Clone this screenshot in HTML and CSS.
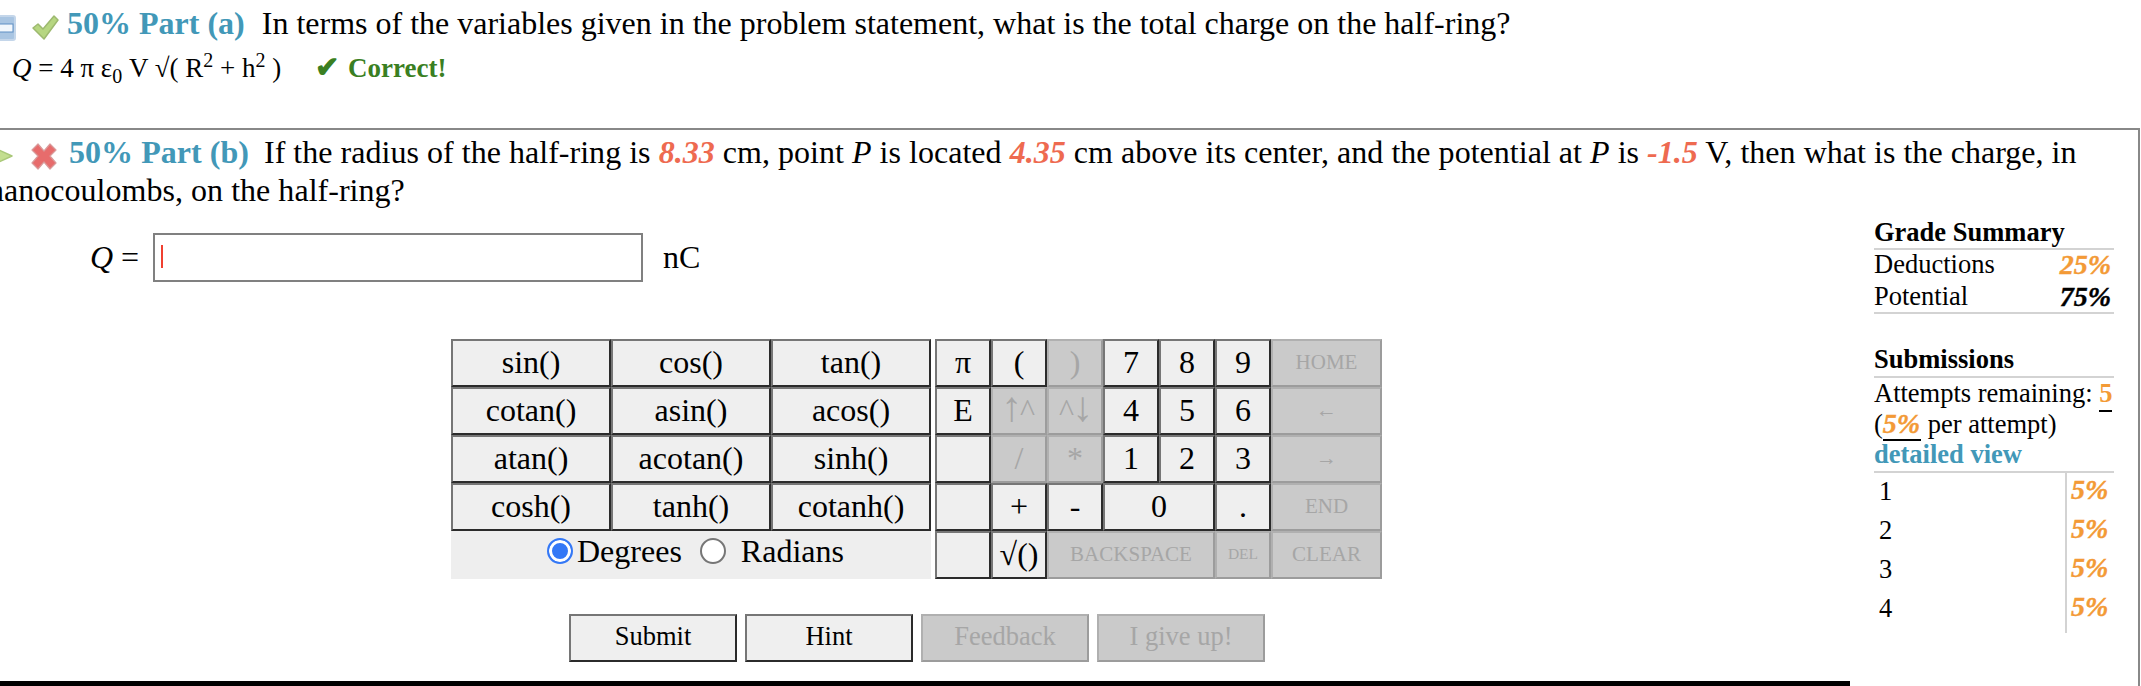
FILE: index.html
```html
<!DOCTYPE html>
<html lang="en">
<head>
<meta charset="utf-8">
<title>Part (b)</title>
<link rel="stylesheet" href="styles.css">
</head>
<body>
<section class="part-a">
  <h2 class="question">
    <svg class="icon icon-minus" viewBox="0 0 26 26"><rect x="1" y="1" width="24" height="24" rx="2" fill="#a9c5e2" stroke="#c4d6ea" stroke-width="2"/><rect x="3" y="9" width="20" height="8" fill="#f2f7fc" stroke="#5f8fc4" stroke-width="1"/></svg>
    <svg class="icon icon-check" viewBox="0 0 28 28"><path d="M2 15l5-4 5 5L23 3l4 4-14 19z" fill="#b6d681" stroke="#9db96f" stroke-width="1.5" stroke-linejoin="round"/></svg>
    <span class="part-label part-label-a">50% Part (a)</span><span class="question-text">In terms of the variables given in the problem statement, what is the total charge on the half-ring?</span>
  </h2>
  <p class="answer"><i>Q</i> = 4 π ε<sub>0</sub> V √( R<sup>2</sup> + h<sup>2</sup> )<span class="correct"><span class="tick">✔</span> Correct!</span></p>
</section>
<section class="part-b">
  <h2 class="question question-b">
    <svg class="icon icon-arrow" viewBox="0 0 28 28"><path d="M2 3l24 11L2 25z" fill="#c3de8f" stroke="#a9c878" stroke-width="1.5" stroke-linejoin="round"/></svg>
    <svg class="icon icon-cross" viewBox="0 0 26 28"><path d="M7 2l6 7 6-7 6 6-6 6 6 7-6 6-6-7-6 7-6-6 6-7-6-6z" fill="#e76c6c" stroke="#d99a9a" stroke-width="1.2" stroke-linejoin="round"/></svg>
    <span class="part-label part-label-b">50% Part (b)</span><span class="question-text">If the radius of the half-ring is <b class="var">8.33</b> cm, point <i>P</i> is located <b class="var">4.35</b> cm above its center, and the potential at <i>P</i> is <b class="var">-1.5</b> V, then what is the charge, in nanocoulombs, on the half-ring?</span>
  </h2>
  <div class="body-row">
    <div class="main">
      <div class="entry">
        <label class="entry-label"><i>Q</i> =</label>
        <div class="entry-box"><span class="caret"></span></div>
        <span class="entry-unit">nC</span>
      </div>
      <div class="calc">
        <div class="funcs">
          <button class="key">sin()</button><button class="key">cos()</button><button class="key">tan()</button>
          <button class="key">cotan()</button><button class="key">asin()</button><button class="key">acos()</button>
          <button class="key">atan()</button><button class="key">acotan()</button><button class="key">sinh()</button>
          <button class="key">cosh()</button><button class="key">tanh()</button><button class="key">cotanh()</button>
          <div class="angle">
            <input class="radio" type="radio" name="angle" checked><span class="angle-deg">Degrees</span>
            <input class="radio radio-rad" type="radio" name="angle"><span class="angle-rad">Radians</span>
          </div>
        </div>
        <div class="pad">
          <button class="key">π</button><button class="key">(</button><button class="key off">)</button><button class="key">7</button><button class="key">8</button><button class="key">9</button><button class="key off small">HOME</button>
          <button class="key">E</button><button class="key off"><span class="big-arrow">↑</span>^</button><button class="key off">^<span class="big-arrow">↓</span></button><button class="key">4</button><button class="key">5</button><button class="key">6</button><button class="key off small">←</button>
          <button class="key"></button><button class="key off">/</button><button class="key off">*</button><button class="key">1</button><button class="key">2</button><button class="key">3</button><button class="key off small">→</button>
          <button class="key"></button><button class="key">+</button><button class="key">-</button><button class="key span2">0</button><button class="key">.</button><button class="key off small">END</button>
          <button class="key"></button><button class="key">√()</button><button class="key off small span3">BACKSPACE</button><button class="key off tiny">DEL</button><button class="key off small">CLEAR</button>
        </div>
      </div>
      <div class="actions">
        <button class="key action">Submit</button>
        <button class="key action">Hint</button>
        <button class="key action off">Feedback</button>
        <button class="key action off">I give up!</button>
      </div>
    </div>
    <aside class="side">
      <h3 class="side-title">Grade Summary</h3>
      <div class="summary">
        <div class="summary-row"><span>Deductions</span><b class="pct">25%</b></div>
        <div class="summary-row"><span>Potential</span><b class="pct pct-black">75%</b></div>
      </div>
      <h3 class="side-title side-title-sub">Submissions</h3>
      <p class="attempts">Attempts remaining: <b class="mark">5</b><br>(<span class="mark-wide"><b class="mark-val">5%</b></span> per attempt)<br><a class="detail">detailed view</a></p>
      <div class="tries">
        <span class="try-n">1</span><b class="try-v">5%</b>
        <span class="try-n">2</span><b class="try-v">5%</b>
        <span class="try-n">3</span><b class="try-v">5%</b>
        <span class="try-n">4</span><b class="try-v">5%</b>
      </div>
    </aside>
  </div>
</section>
</body>
</html>
```
FILE: styles.css
```css
* { box-sizing: border-box; }
html, body { margin: 0; padding: 0; width: 2141px; height: 686px; overflow: hidden; background: #fff; }
body { font-family: "Liberation Serif", "Times New Roman", serif; color: #000; }

.question { margin: 0; font-size: 32px; line-height: 38px; font-weight: normal; }
.part-a { height: 128px; padding-top: 4px; }
.part-b { height: 558px; border-top: 2px solid #888; border-right: 2px solid #888; margin-right: 1px; padding-top: 3px; }
.question-b { margin-left: -12px; letter-spacing: 0.03px; }

.icon { display: inline-block; vertical-align: -7px; }
.icon-minus { width: 26px; height: 26px; margin-left: -10px; margin-right: 7px; }
.icon-check { width: 28px; height: 28px; margin-right: 0; }
.icon-arrow { width: 28px; height: 28px; margin-left: -2px; margin-right: 6px; }
.icon-cross { width: 26px; height: 28px; margin-left: 3px; margin-right: 4px; }

.part-label { font-weight: bold; color: #4298b8; }
.part-label-a { margin-right: 17px; }
.part-label-b { margin-right: 15px; }
.var { font-style: italic; color: #ee6a50; }

.answer { margin: 7px 0 0 12px; font-size: 27px; line-height: 38px; }
.answer sub, .answer sup { font-size: 20px; line-height: 0; }
.correct { margin-left: 34px; color: #3a7f22; font-weight: bold; }
.tick { font-size: 29px; line-height: 0; margin-right: 2px; }

.body-row { display: flex; align-items: stretch; }
.main { width: 1850px; height: 477px; border-bottom: 5px solid #000; flex: none; }

.entry { display: flex; align-items: center; height: 49px; margin-top: 24px; padding-left: 90px; font-size: 32px; }
.entry-label { width: 63px; }
.entry-box { width: 490px; height: 49px; border: 2px solid #808080; padding: 10px 6px; }
.caret { display: block; width: 2px; height: 23px; background: #f04030; }
.entry-unit { margin-left: 20px; }

.calc { display: flex; gap: 4px; margin: 57px 0 0 451px; }
.funcs { display: grid; grid-template-columns: repeat(3, 160px); grid-auto-rows: 48px; }
.pad { display: grid; grid-template-columns: repeat(6, 56px) 111px; grid-auto-rows: 48px; }

.key {
  margin: 0; padding: 0 0 2px; font-family: inherit; font-size: 32px; line-height: 1; color: #000;
  background: #efefef; border: 2px solid; border-color: #767676 #2b2b2b #2b2b2b #767676;
}
.off { background: #cacaca; color: #a6a6a6; border-color: #b0b0b0 #9c9c9c #9c9c9c #b0b0b0; }
.small { font-size: 21px; }
.tiny { font-size: 15.5px; }
.span2 { grid-column: span 2; }
.span3 { grid-column: span 3; }
.big-arrow { font-size: 42px; line-height: 0; margin: 0 -2px; }

.angle { grid-column: span 3; display: flex; align-items: center; background: #eee; font-size: 32px; padding: 0 0 8px 96px; }
.radio { appearance: none; margin: 0; width: 26px; height: 26px; border-radius: 50%; background: #fff; border: 2px solid #767676; flex: none; }
.radio:checked { background: #3478f6; border: 2px solid #3478f6; box-shadow: inset 0 0 0 3px #fff; }
.angle-deg { margin-left: 4px; }
.radio-rad { margin-left: 18px; }
.angle-rad { margin-left: 15px; }

.actions { display: flex; gap: 8px; margin: 35px 0 0 569px; }
.action { width: 168px; height: 48px; font-size: 26.5px; padding-bottom: 4px; }

.side { width: 240px; margin-left: 24px; padding-top: 7px; font-size: 26.5px; flex: none; }
.side-title { margin: 0; font-size: 26.5px; line-height: 32px; border-bottom: 2px solid #d3d3d3; }
.side-title-sub { margin-top: 29px; line-height: 33px; }
.summary { border-bottom: 2px solid #d3d3d3; margin-top: -1px; padding-bottom: 0; }
.summary-row { display: flex; justify-content: space-between; padding-right: 3px; line-height: 31.5px; }
.pct { font-size: 28px; font-style: italic; color: #f39a36; -webkit-text-stroke: 0.4px; }
.pct-black { color: #000; }
.attempts { margin: 0; line-height: 30.5px; }
.mark { color: #f39a36; border-bottom: 2px solid #000; padding-bottom: 2px; }
.mark-wide { border-bottom: 2px solid #000; padding: 0 1px 0 0; }
.mark-val { font-size: 28px; font-style: italic; color: #f39a36; -webkit-text-stroke: 0.4px; }
.detail { font-weight: bold; color: #4298b8; }
.tries { display: grid; grid-template-columns: 191px 49px; grid-template-rows: repeat(3, 39px) 43px; margin-top: 1px; border-top: 2px solid #d3d3d3; }
.try-n { padding-left: 5px; line-height: 36px; }
.try-v { font-size: 28px; font-style: italic; color: #f39a36; -webkit-text-stroke: 0.4px; border-left: 2px solid #d3d3d3; padding-left: 4px; line-height: 34px; }
```
